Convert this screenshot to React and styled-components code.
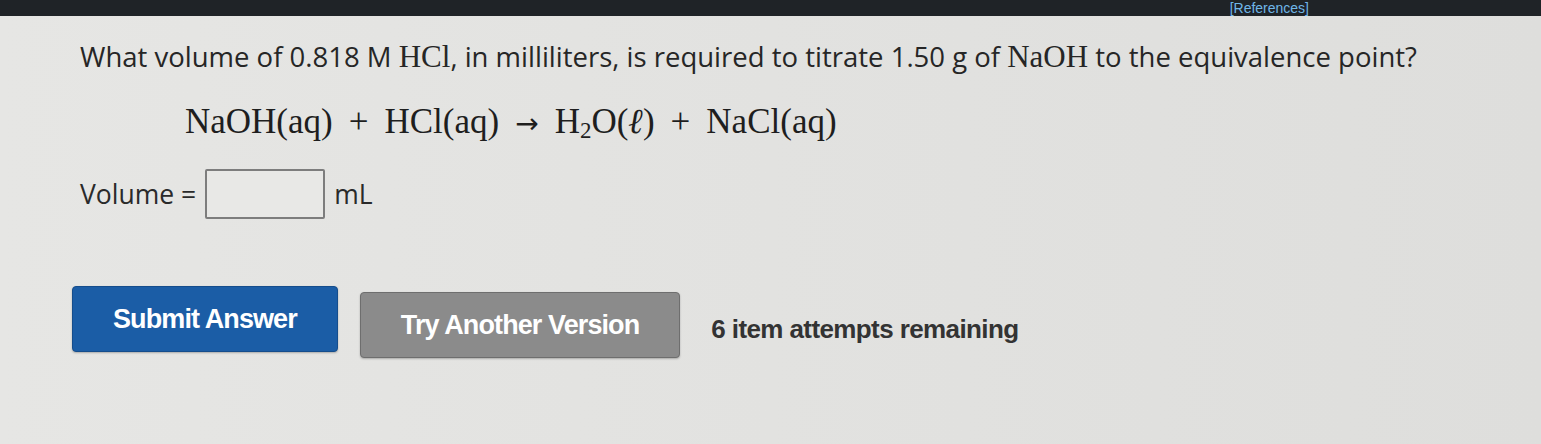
import React from 'react'
import styled, { createGlobalStyle } from 'styled-components'

const Global = createGlobalStyle`
	html, body {
		margin    : 0;
		padding   : 0;
		background: #e3e3e1;
	}
	body {
		font-family: "Open Sans", "Liberation Sans", sans-serif;
		color      : #222;
	}
`

const Page = styled.div`
	width         : 1541px;
	height        : 444px;
	overflow      : hidden;
	display       : flex;
	flex-direction: column;
	background    : linear-gradient(90deg, #e6e6e4 0%, #e2e2e0 50%, #dededc 100%);
`

const TopBar = styled.div`
	height         : 16px;
	background     : #1f2327;
	display        : flex;
	justify-content: flex-end;
	align-items    : center;
	padding-right  : 232px;
`

const RefLink = styled.span`
	font-family: "Liberation Sans", sans-serif;
	font-size  : 14px;
	line-height: 16px;
	color      : #6fb6e8;
`

const Content = styled.div`
	padding       : 22px 0 0 80px;
	display       : flex;
	flex-direction: column;
`

const Question = styled.p`
	margin     : 0;
	font-size  : 27.5px;
	line-height: 38px;
	color      : #262626;
	white-space: nowrap;
`

const Math = styled.span`
	font-family: "Liberation Serif", "DejaVu Serif", serif;
	font-size  : 31px;
`

const Equation = styled.div`
	margin-top : 26px;
	margin-left: 105px;
	font-family: "Liberation Serif", "DejaVu Serif", serif;
	font-size  : 35px;
	line-height: 40px;
	color      : #1e1e1e;
	white-space: nowrap;
	sub {
		font-size     : 23px;
		vertical-align: -5px;
	}
`

const Op = styled.span`
	margin: 0 16px;
`

const Arrow = styled(Op)`
	font-family: "DejaVu Sans", sans-serif;
	font-size  : 28px;
`

const AnswerRow = styled.div`
	margin-top : 18px;
	display    : flex;
	align-items: center;
	gap        : 9px;
	font-size  : 26.5px;
	color      : #2a2a2a;
`

const Field = styled.input`
	width        : 120px;
	height       : 50px;
	box-sizing   : border-box;
	border       : 2px solid #7d7d7d;
	border-radius: 2px;
	background   : #e8e8e6;
`

const Actions = styled.div`
	margin-top : 67px;
	margin-left: -8px;
	display    : flex;
	align-items: flex-start;
	gap        : 22px;
`

const Button = styled.button`
	height        : 66px;
	margin-top    : ${p => p.$drop}px;
	padding       : 0 40px;
	border-radius : 4px;
	border        : 1px solid ${p => p.$edge};
	background    : ${p => p.$bg};
	color         : #fff;
	font-family   : "Liberation Sans", Arial, sans-serif;
	font-weight   : 700;
	font-size     : 27px;
	letter-spacing: -0.9px;
	box-shadow    : 0 1px 2px rgba(0, 0, 0, 0.25);
`

const Attempts = styled.span`
	margin-top    : 28px;
	margin-left   : 9px;
	font-family   : "Liberation Sans", Arial, sans-serif;
	font-weight   : 700;
	font-size     : 26px;
	line-height   : 30px;
	letter-spacing: -0.6px;
	color         : #333;
`

export default function App() {
	return (
		<Page>
			<Global />
			<TopBar>
				<RefLink>[References]</RefLink>
			</TopBar>
			<Content>
				<Question>
					What volume of 0.818 M <Math>HCl</Math>, in milliliters, is required to titrate 1.50 g of <Math>NaOH</Math> to the equivalence point?
				</Question>
				<Equation>
					NaOH(aq)<Op>+</Op>HCl(aq)<Arrow>→</Arrow>H<sub>2</sub>O(<i>ℓ</i>)<Op>+</Op>NaCl(aq)
				</Equation>
				<AnswerRow>
					Volume =
					<Field type="text" />
					mL
				</AnswerRow>
				<Actions>
					<Button $bg="#1b5da6" $edge="#154d8c" $drop={0}>Submit Answer</Button>
					<Button $bg="#8b8b8b" $edge="#6e6e6e" $drop={6}>Try Another Version</Button>
					<Attempts>6 item attempts remaining</Attempts>
				</Actions>
			</Content>
		</Page>
	)
}
